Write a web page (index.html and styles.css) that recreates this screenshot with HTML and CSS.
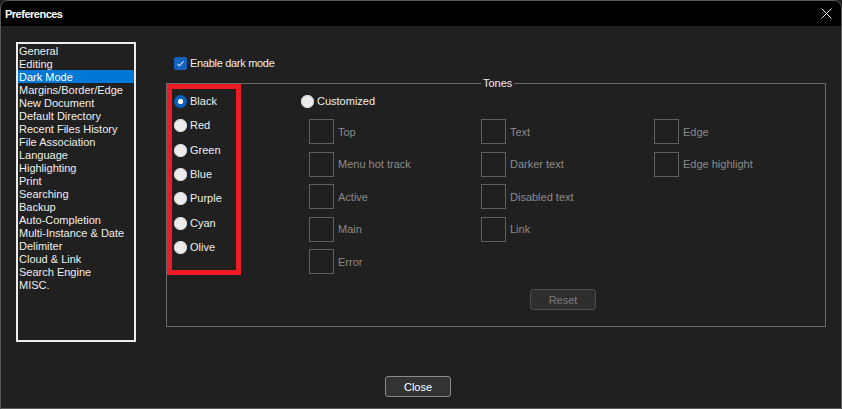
FILE: index.html
```html
<!DOCTYPE html>
<html lang="en">
<head>
    <meta charset="utf-8" />
    <link rel="stylesheet" href="styles.css">
    <title>Preferences</title>
</head>
<body>
    <div class="window">
        <div class="titlebar">
            <span class="title">Preferences</span>
            <svg class="closex" width="11" height="11" viewBox="0 0 11 11">
                <path d="M0.5 0.5 L10.5 10.5 M10.5 0.5 L0.5 10.5" stroke="#e6e6e6" stroke-width="1" fill="none" />
            </svg>
        </div>
        <div class="content">
            <div class="pagelist">
                <div class="item">General</div>
                <div class="item">Editing</div>
                <div class="item selected">Dark Mode</div>
                <div class="item">Margins/Border/Edge</div>
                <div class="item">New Document</div>
                <div class="item">Default Directory</div>
                <div class="item">Recent Files History</div>
                <div class="item">File Association</div>
                <div class="item">Language</div>
                <div class="item">Highlighting</div>
                <div class="item">Print</div>
                <div class="item">Searching</div>
                <div class="item">Backup</div>
                <div class="item">Auto-Completion</div>
                <div class="item">Multi-Instance &amp; Date</div>
                <div class="item">Delimiter</div>
                <div class="item">Cloud &amp; Link</div>
                <div class="item">Search Engine</div>
                <div class="item">MISC.</div>
            </div>
            <div class="panel">
                <div class="enablerow">
                    <span class="checkbox">
                        <svg width="13" height="13" viewBox="0 0 13 13">
                            <path d="M3.5 6.8 L5.5 8.8 L9.6 4.4" stroke="#d6e6f8" stroke-width="1.1" fill="none" />
                        </svg>
                    </span>
                    <span class="label enable">Enable dark mode</span>
                </div>
                <div class="tones">
                    <span class="toneslabel">Tones</span>
                    <div class="presets">
                        <div class="radiorow"><span class="radio on"></span><span class="label">Black</span></div>
                        <div class="radiorow"><span class="radio"></span><span class="label">Red</span></div>
                        <div class="radiorow"><span class="radio"></span><span class="label">Green</span></div>
                        <div class="radiorow"><span class="radio"></span><span class="label">Blue</span></div>
                        <div class="radiorow"><span class="radio"></span><span class="label">Purple</span></div>
                        <div class="radiorow"><span class="radio"></span><span class="label">Cyan</span></div>
                        <div class="radiorow"><span class="radio"></span><span class="label">Olive</span></div>
                    </div>
                    <div class="custom">
                        <div class="radiorow"><span class="radio"></span><span class="label">Customized</span></div>
                        <div class="swatches">
                            <div class="swcol first">
                                <div class="swatch"><span class="box"></span><span class="swlabel">Top</span></div>
                                <div class="swatch"><span class="box"></span><span class="swlabel">Menu hot track</span></div>
                                <div class="swatch"><span class="box"></span><span class="swlabel">Active</span></div>
                                <div class="swatch"><span class="box"></span><span class="swlabel">Main</span></div>
                                <div class="swatch"><span class="box"></span><span class="swlabel">Error</span></div>
                            </div>
                            <div class="swcol second">
                                <div class="swatch"><span class="box"></span><span class="swlabel">Text</span></div>
                                <div class="swatch"><span class="box"></span><span class="swlabel">Darker text</span></div>
                                <div class="swatch"><span class="box"></span><span class="swlabel">Disabled text</span></div>
                                <div class="swatch"><span class="box"></span><span class="swlabel">Link</span></div>
                            </div>
                            <div class="swcol last">
                                <div class="swatch"><span class="box"></span><span class="swlabel">Edge</span></div>
                                <div class="swatch"><span class="box"></span><span class="swlabel">Edge highlight</span></div>
                            </div>
                        </div>
                        <button class="resetbut">Reset</button>
                    </div>
                </div>
            </div>
        </div>
        <div class="footer">
            <button class="closebut">Close</button>
        </div>
    </div>
</body>
</html>
```
FILE: styles.css
```css
body {
    margin: 0;
    background-color: #202020;
    font-family: "Liberation Sans", Arial, sans-serif;
    font-size: 11px;
}
.window {
    width: 842px;
    height: 409px;
    box-sizing: border-box;
    border: 1px solid #5a5a5a;
    border-radius: 8px 8px 0 0;
    background-color: #202020;
    display: flex;
    flex-direction: column;
    overflow: hidden;
}
.titlebar {
    height: 25px;
    background-color: #000;
    display: flex;
    align-items: center;
    justify-content: space-between;
    padding: 0 9px 0 4px;
}
.title {
    color: #fff;
    font-weight: bold;
    font-size: 11px;
    letter-spacing: -0.5px;
}
.closex {
    margin-top: -1px;
}
.content {
    display: flex;
    padding: 16px 0 0 15px;
}
.pagelist {
    width: 120px;
    height: 300px;
    flex-shrink: 0;
    box-sizing: border-box;
    border: 2px solid #ececec;
}
.item {
    height: 13px;
    line-height: 14px;
    padding-left: 1px;
    color: #eeeeee;
    white-space: nowrap;
}
.selected {
    background-color: #0078d7;
    color: #fff;
}
.panel {
    margin-left: 30px;
    width: 660px;
    flex-shrink: 0;
}
.enablerow {
    display: flex;
    align-items: center;
    gap: 3px;
    margin-top: 15px;
    padding-left: 8px;
    height: 13px;
}
.checkbox {
    width: 13px;
    height: 13px;
    border-radius: 2px;
    background-color: #1462be;
    display: block;
}
.checkbox svg {
    display: block;
}
.label {
    color: #eeeeee;
    line-height: 13px;
    white-space: nowrap;
}
.enable {
    letter-spacing: -0.3px;
}
.tones {
    position: relative;
    margin-top: 13px;
    width: 660px;
    height: 244px;
    box-sizing: border-box;
    border: 1px solid #6a6a6a;
    display: flex;
}
.toneslabel {
    position: absolute;
    top: -7px;
    left: 314px;
    padding: 0 2px;
    line-height: 13px;
    background-color: #202020;
    color: #eeeeee;
}
.presets {
    width: 74px;
    height: 191px;
    flex-shrink: 0;
    box-sizing: border-box;
    border: 5px solid #ed1c24;
    padding: 6px 0 0 2px;
}
.radiorow {
    display: flex;
    gap: 3px;
    height: 24.33px;
    align-items: flex-start;
}
.radio {
    width: 13px;
    height: 13px;
    border-radius: 50%;
    background-color: #ebebeb;
    box-shadow: inset 0 0 0 1px #d4d4d4;
    flex-shrink: 0;
}
.radio.on {
    background: radial-gradient(circle, #fff 0 2.4px, #0b5fbd 3px);
    box-shadow: none;
}
.custom {
    margin-left: 60px;
    padding-top: 11px;
}
.custom .radiorow {
    height: 13px;
}
.swatches {
    display: flex;
    margin: 11px 0 0 8px;
}
.swcol {
    display: flex;
    flex-direction: column;
    gap: 7.5px;
    width: 173px;
}
.swcol.first {
    width: 172px;
}
.swcol.last {
    width: auto;
}
.swatch {
    display: flex;
    align-items: center;
    gap: 4px;
    height: 25px;
}
.box {
    width: 25px;
    height: 25px;
    box-sizing: border-box;
    border: 1px solid #606060;
}
.swlabel {
    color: #8a8a8a;
    white-space: nowrap;
}
.resetbut {
    display: block;
    margin: 15px 0 0 229px;
    width: 66px;
    height: 21px;
    border: 1px solid #4c4c4c;
    border-radius: 3px;
    background-color: #2e2e2e;
    color: #7c7c7c;
    font-family: "Liberation Sans", Arial, sans-serif;
    font-size: 11px;
    padding: 0;
}
.footer {
    margin-top: auto;
    padding: 0 0 11px 384px;
}
.closebut {
    display: block;
    width: 66px;
    height: 21px;
    border: 1px solid #8a8a8a;
    border-radius: 3px;
    background-color: #333333;
    color: #ffffff;
    font-family: "Liberation Sans", Arial, sans-serif;
    font-size: 11px;
    padding: 0;
}
```
